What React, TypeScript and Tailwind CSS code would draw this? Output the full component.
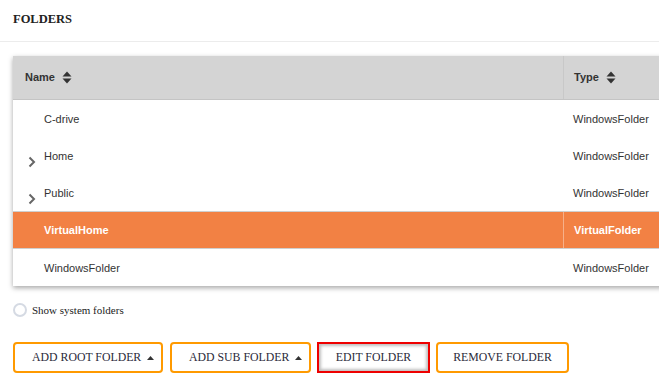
import React from 'react';

const rows = [
  { name: 'C-drive', type: 'WindowsFolder', expandable: false },
  { name: 'Home', type: 'WindowsFolder', expandable: true },
  { name: 'Public', type: 'WindowsFolder', expandable: true },
  { name: 'VirtualHome', type: 'VirtualFolder', expandable: false, selected: true },
  { name: 'WindowsFolder', type: 'WindowsFolder', expandable: false },
];

const SortIcon = () => (
  <svg width="10" height="13" viewBox="0 0 10 13" className="ml-[7px]">
    <path d="M5 0.5 L9.5 5.5 H0.5 Z" fill="#333" />
    <path d="M5 12.5 L9.5 7.5 H0.5 Z" fill="#333" />
  </svg>
);

const Chevron = () => (
  <svg width="8" height="12" viewBox="0 0 8 12" className="mt-[11px]">
    <polyline points="1.5,1.5 6,6 1.5,10.5" fill="none" stroke="#666" strokeWidth="2" />
  </svg>
);

const Caret = () => (
  <svg width="7" height="4" viewBox="0 0 7 4" className="ml-[6px]">
    <path d="M3.5 0 L7 4 H0 Z" fill="#333" />
  </svg>
);

export default function App() {
  const serif = { fontFamily: '"Liberation Serif", "Times New Roman", serif' };
  return (
    <div
      className="w-[659px] h-[376px] overflow-hidden bg-white text-[#333]"
      style={{ fontFamily: '"Liberation Sans", Arial, sans-serif' }}
    >
      <div className="h-[42px] border-b border-[#ececec] pl-[13px] pt-[11px]">
        <h1 className="text-[12.5px] font-bold leading-[16px] text-[#222]" style={serif}>
          FOLDERS
        </h1>
      </div>

      <div className="ml-[13px] mt-[14px] w-[700px] bg-white shadow-[0_2px_5px_rgba(0,0,0,0.35)]">
        <div className="grid grid-cols-[550px_1fr] h-[44px] bg-[#d4d4d4] border-b border-[#c4c4c4] text-[11px] font-bold">
          <div className="flex items-center pl-[12px]">
            Name
            <SortIcon />
          </div>
          <div className="flex items-center pl-[10px] border-l border-[#c8c8c8]">
            Type
            <SortIcon />
          </div>
        </div>
        {rows.map((r) =>
          r.selected ? (
            <div
              key={r.name}
              className="grid grid-cols-[550px_1fr] h-[38px] bg-[#f28144] border-y border-[#cfcfcf] text-[11px] font-bold text-white"
            >
              <div className="flex items-center pl-[31px]">{r.name}</div>
              <div className="flex items-center pl-[10px] border-l border-[#f6b08a]">{r.type}</div>
            </div>
          ) : (
            <div key={r.name} className="grid grid-cols-[550px_1fr] h-[37px] pt-[1px] text-[11px]">
              <div className="flex items-center">
                <div className="w-[31px] pl-[15px] flex">{r.expandable && <Chevron />}</div>
                {r.name}
              </div>
              <div className="flex items-center pl-[10px]">{r.type}</div>
            </div>
          )
        )}
      </div>

      <label className="flex items-center ml-[13px] mt-[17px] h-[14px] text-[11px] text-[#222]" style={serif}>
        <span className="w-[14px] h-[14px] rounded-full border-2 border-[#d5dae3] bg-white mr-[5px]" />
        Show system folders
      </label>

      <div className="flex ml-[13px] mt-[25px] text-[11.8px] text-[#2a2a3a]" style={serif}>
        <button className="flex items-center w-[150px] h-[31px] pl-[17px] border-2 border-[#ff9a00] rounded-[4px] bg-white">
          ADD ROOT FOLDER
          <Caret />
        </button>
        <button className="flex items-center w-[141px] h-[31px] pl-[17px] ml-[7px] border-2 border-[#ff9a00] rounded-[4px] bg-white">
          ADD SUB FOLDER
          <Caret />
        </button>
        <button className="flex items-center justify-center w-[113px] h-[31px] ml-[6px] border-2 border-[#ee0000] bg-white shadow-[inset_0_0_3px_2px_rgba(0,0,0,0.25)]">
          EDIT FOLDER
        </button>
        <button className="flex items-center justify-center w-[133px] h-[31px] ml-[6px] border-2 border-[#ff9a00] rounded-[4px] bg-white">
          REMOVE FOLDER
        </button>
      </div>
    </div>
  );
}
